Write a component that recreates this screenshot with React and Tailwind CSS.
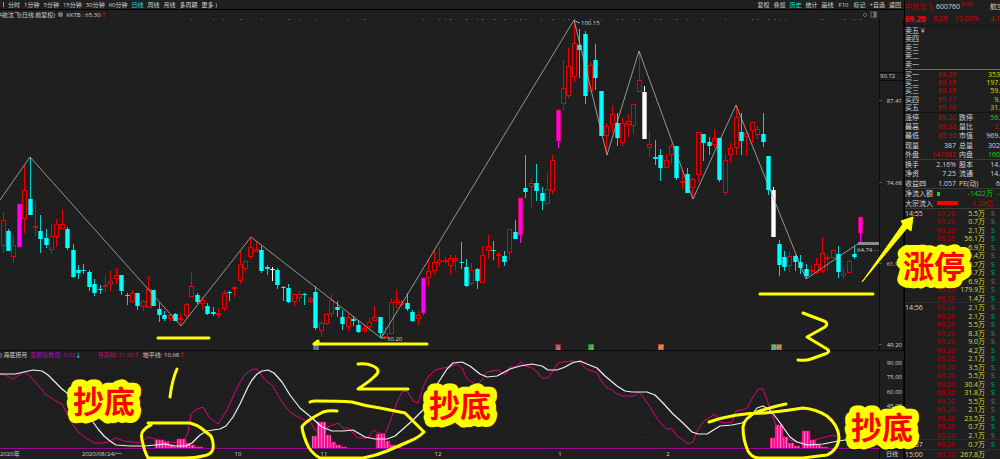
import clsx from 'clsx'

const periods = ['分时', '1分钟', '5分钟', '15分钟', '30分钟', '60分钟', '日线', '周线', '月线', '多周期', '更多 )']
const tools = ['复权', '叠加', '历史', '统计', '画线', 'F10', '标记', '+自选', '返回']

// one entry per day: kind, high, body top, body bottom, low
const candles = [
	['r', 212, 220, 246, 253], ['c', 229, 231, 251, 251], ['r', 237, 245, 257, 263], ['m', 204, 204, 247, 247],
	['r', 165, 190, 219, 233], ['c', 157, 199, 215, 215], ['r', 201, 226, 228, 236], ['c', 215, 231, 239, 253],
	['c', 229, 238, 245, 248], ['r', 224, 236, 250, 254], ['r', 219, 224, 237, 247], ['r', 209, 224, 229, 229],
	['c', 227, 229, 248, 250], ['c', 244, 250, 277, 278], ['c', 265, 270, 273, 279], ['c', 264, 270, 271, 274],
	['c', 270, 272, 287, 291], ['c', 279, 284, 293, 296], ['c', 285, 289, 290, 294], ['r', 275, 285, 287, 292],
	['r', 271, 281, 284, 291], ['r', 268, 275, 279, 284], ['c', 275, 275, 291, 295], ['c', 293, 295, 296, 305],
	['r', 290, 293, 302, 303], ['c', 293, 293, 306, 310], ['r', 300, 301, 307, 311], ['r', 276, 289, 308, 308],
	['c', 290, 290, 306, 306], ['c', 303, 309, 315, 322], ['c', 311, 315, 319, 321], ['r', 314, 315, 319, 321],
	['c', 313, 314, 321, 321], ['r', 313, 318, 319, 326], ['r', 303, 304, 316, 318], ['r', 272, 286, 297, 297],
	['c', 293, 295, 302, 304], ['r', 297, 300, 304, 310], ['c', 303, 306, 314, 315], ['c', 307, 312, 314, 316],
	['r', 308, 313, 315, 318], ['r', 290, 293, 309, 311], ['c', 291, 292, 293, 301], ['r', 286, 287, 288, 297],
	['r', 251, 264, 281, 284], ['r', 260, 261, 269, 273], ['r', 237, 247, 257, 259], ['r', 241, 249, 252, 252],
	['c', 246, 250, 271, 273], ['c', 265, 267, 269, 275], ['w', 267, 269, 270, 281], ['c', 268, 270, 285, 289],
	['c', 286, 287, 288, 301], ['c', 284, 288, 302, 303], ['r', 294, 294, 302, 306], ['r', 291, 294, 298, 302],
	['c', 293, 294, 295, 305], ['r', 297, 299, 302, 303], ['c', 286, 292, 328, 330], ['r', 321, 323, 331, 337],
	['r', 313, 314, 324, 325], ['r', 294, 300, 314, 317], ['c', 301, 307, 310, 317], ['c', 310, 317, 324, 330],
	['r', 314, 317, 327, 331], ['c', 316, 319, 321, 326], ['c', 320, 325, 332, 333], ['r', 324, 328, 331, 333],
	['r', 318, 322, 327, 331], ['r', 306, 317, 321, 321], ['c', 317, 317, 333, 338], ['r', 327, 333, 337, 337],
	['r', 298, 302, 334, 334], ['r', 289, 300, 303, 308], ['r', 300, 302, 305, 307], ['c', 293, 303, 309, 311],
	['c', 310, 312, 321, 322], ['r', 311, 315, 319, 325], ['m', 278, 278, 313, 315], ['r', 259, 271, 278, 287],
	['r', 249, 262, 271, 275], ['r', 247, 260, 263, 266], ['r', 257, 260, 261, 264], ['r', 255, 258, 266, 275],
	['r', 255, 258, 261, 270], ['c', 242, 262, 263, 269], ['c', 259, 267, 286, 287], ['r', 263, 270, 284, 285],
	['c', 268, 269, 281, 289], ['r', 246, 255, 283, 283], ['r', 235, 246, 251, 259], ['c', 241, 250, 251, 260],
	['r', 252, 254, 256, 268], ['c', 251, 256, 262, 266], ['r', 229, 229, 253, 260], ['c', 220, 232, 239, 239],
	['m', 198, 198, 235, 243], ['c', 155, 188, 192, 198], ['r', 178, 183, 187, 207], ['c', 164, 183, 191, 201],
	['c', 187, 193, 201, 210], ['r', 173, 189, 204, 204], ['r', 155, 160, 191, 194], ['m', 110, 110, 141, 148],
	['r', 60, 88, 104, 110], ['r', 48, 66, 96, 98], ['r', 21, 43, 77, 82], ['c', 29, 45, 50, 78],
	['c', 31, 34, 96, 104], ['r', 62, 65, 92, 92], ['c', 44, 60, 78, 90], ['c', 91, 91, 136, 136],
	['r', 123, 126, 136, 155], ['r', 105, 114, 125, 133], ['c', 113, 123, 138, 146], ['r', 118, 123, 143, 146],
	['r', 114, 121, 125, 137], ['r', 104, 104, 126, 134], ['r', 51, 80, 92, 92], ['w', 86, 92, 139, 139],
	['r', 132, 144, 148, 157], ['c', 140, 157, 159, 165], ['c', 149, 155, 168, 181], ['r', 154, 160, 168, 168],
	['r', 143, 146, 155, 164], ['c', 146, 146, 178, 180], ['r', 170, 181, 183, 189], ['c', 168, 174, 193, 193],
	['r', 178, 179, 188, 199], ['r', 132, 132, 175, 182], ['c', 134, 134, 143, 161], ['c', 137, 142, 146, 155],
	['r', 129, 138, 145, 148], ['c', 138, 138, 180, 182], ['r', 154, 160, 193, 196], ['r', 143, 148, 155, 163],
	['r', 105, 117, 148, 155], ['c', 113, 132, 141, 155], ['r', 131, 133, 137, 156], ['r', 122, 122, 131, 143],
	['r', 126, 129, 135, 139], ['c', 113, 134, 142, 147], ['c', 156, 156, 190, 195], ['w', 187, 190, 237, 237],
	['c', 240, 244, 265, 276], ['c', 251, 257, 267, 271], ['r', 252, 256, 266, 272], ['c', 255, 256, 262, 271],
	['c', 255, 262, 268, 274], ['c', 264, 269, 276, 278], ['r', 265, 270, 272, 275], ['r', 258, 264, 273, 274],
	['r', 237, 253, 271, 273], ['r', 255, 257, 258, 270], ['r', 249, 250, 258, 259], ['c', 246, 254, 272, 278],
	['r', 267, 273, 276, 279], ['r', 259, 261, 273, 273], ['c', 246, 254, 257, 259], ['m', 217, 217, 233, 243],
]

const signalDots = [191, 213, 223, 240, 261, 288, 299, 315, 347, 364, 423, 439, 445, 450, 466, 477, 482, 494, 504, 515, 520, 525, 541, 552, 563, 568, 574, 590, 601, 617, 622, 633, 639, 655, 660, 676, 687, 703, 725, 752, 757, 768, 774, 779, 785, 822, 844, 854, 860]
const gridX = [106, 213, 321, 429, 537, 645, 753]

const zigzag = '0,200 30,157 181,326 251,237 381,338 574,20 607,155 639,51 693,199 736,105 806,279 859,243'

const moonLine = '0,374 5,375 13,379 19,375 24,372 30,376 38,385 46,395 52,398 57,402 62,404 66,412 71,422 78,432 86,438 94,443 102,443 108,442 116,438 124,441 132,442 140,443 148,437 155,439 163,441 172,442 183,443 188,432 191,414 197,409 203,407 209,417 218,424 226,412 235,392 243,377 248,372 254,369 257,369 262,376 267,382 272,385 278,395 284,405 290,412 296,416 304,420 311,423 315,430 322,435 328,427 338,423 343,428 348,428 358,438 367,438 374,430 378,433 385,434 387,430 392,416 397,402 402,392 407,391 413,401 418,403 423,387 428,377 435,370 443,368 450,367 457,364 462,368 467,379 473,383 478,384 482,380 487,372 498,370 505,375 510,367 515,367 521,362 526,366 532,368 537,372 542,378 548,378 553,371 558,363 563,362 572,361 580,362 586,369 597,373 602,382 607,388 612,390 617,394 623,396 634,396 639,392 644,398 650,407 658,420 666,429 672,429 677,436 683,440 688,444 693,442 698,429 704,421 715,414 720,422 725,423 732,422 736,411 742,410 747,408 753,397 758,389 763,389 767,400 772,415 777,428 783,437 790,440 797,442 808,442 818,439 833,435 838,437'
const horizonLine = '0,374 15,374 24,372 33,370 42,371 48,375 55,382 62,389 67,393 80,405 93,422 98,429 104,436 110,441 116,445 130,446 145,446 155,445 165,444 175,446 186,446 192,443 200,435 207,431 213,430 220,429 226,426 233,417 240,404 248,387 252,380 257,374 262,371 268,370 274,373 282,382 290,395 300,408 312,418 322,427 332,431 343,431 353,430 365,437 375,439 387,439 395,436 403,429 412,421 418,415 423,410 430,398 438,383 447,369 453,363 462,362 470,366 480,374 487,377 497,376 510,369 520,366 532,364 542,366 548,370 557,370 565,367 572,363 580,361 587,364 597,368 605,376 617,386 625,391 632,392 647,392 655,395 663,403 673,414 683,423 692,432 698,434 707,434 720,426 732,425 742,423 750,417 757,408 763,406 770,410 778,420 785,430 790,437 797,442 807,445 823,444 833,442 845,440 858,440'

// x, width, top of every bar; all stand on the base line
const bars = [
	[155, 9, 440], [164, 5, 442], [169, 5, 445], [174, 3, 447], [177, 9, 439], [186, 4, 443], [190, 5, 445], [195, 8, 447],
	[312, 5, 436], [317, 9, 422], [326, 5, 435], [331, 5, 442], [336, 5, 445], [341, 6, 447],
	[376, 9, 434], [385, 5, 441], [390, 5, 445], [395, 6, 447],
	[770, 5, 438], [775, 8, 425], [783, 5, 437], [788, 6, 443], [794, 6, 446], [802, 8, 431], [810, 6, 440], [816, 5, 445], [821, 7, 447],
]

const markers = [
	[313, '回', '#27508c'], [555, '涨', '#a01c28'], [588, '减', '#138a1c'], [658, '榜', '#c04a10'], [771, '跌', '#1b8a3a'], [776, '榜', '#8a5a2a'],
]

const asks = ['卖五 ¥', '卖四', '卖三', '卖二', '卖一']
const bids = [['买一', '69.20', '3537'], ['买二', '69.19', '197.9'], ['买三', '69.18', '59.9'], ['买四', '69.17', '9.7'], ['买五', '69.16', '31.5']]

const RED = 'text-[#dc0000]'
const WHITE = 'text-[#d2d2d2]'
const GREEN = 'text-[#00dc00]'
const quotes = [
	['涨停', '69.20', RED, '跌停', '56.6', GREEN],
	['最高', '69.20', RED, '量比', '2.0', RED],
	['最低', '65.30', RED, '市值', '969.4', WHITE],
	['现量', '387', WHITE, '总量', '3022', WHITE],
	['外盘', '141982', RED, '内盘', '1602', GREEN],
]
const ratios = [
	['换手', '2.16%', WHITE, '股本', '14.0', WHITE],
	['净资', '7.25', WHITE, '流通', '14.0', WHITE],
	['收益㈣', '1.057', WHITE, 'PE(动)', '65', WHITE],
]

const volumes = ['5.5', '0.7', '2.1', '56.1', '6.9', '9.4', '0.7', '0.7', '6.9', '179.9', '1.4', '2.1', '2.1', '5.5', '8.3', '9.0', '4.2', '2.1', '3.5', '5.5', '30.4', '31.8', '5.5', '2.1', '23.5', '0.7', '2.1', '0.7', '267.8']
const times = { 0: '14:55', 11: '14:56', 27: '14:57', 28: '15:00' }

function Toolbar() {
	return (
		<nav className="flex h-[10px] items-center justify-between border-b border-black pr-[3px]">
			<div className="flex items-center gap-1">
				<span className="h-[5px] w-1 border-r border-[#999]" />
				{periods.map(p => (
					<button key={p} type="button" className={p === '日线' ? 'text-[#00e6e6]' : ''}>{p}</button>
				))}
			</div>
			<div className="flex items-center gap-1">
				{tools.map(p => (
					<button key={p} type="button" className={clsx(p === '历史' && 'text-[#00e6e6]', p === 'F10' && 'px-px')}>{p}</button>
				))}
			</div>
		</nav>
	)
}

function Candle({ x, kind, high, top, bottom, low }) {
	const color = { r: '#e60000', c: '#00ffff', m: '#ff00ff', w: '#ffffff' }[kind]
	const h = Math.max(bottom - top, 1)
	if (kind === 'r') {
		return (
			<g stroke={color} fill="none">
				<path d={`M${x} ${high}V${top}M${x} ${bottom}V${low}`} />
				<rect x={x - 2} y={top + 0.5} width="4" height={Math.max(h - 1, 1)} />
			</g>
		)
	}
	return (
		<g>
			<path d={`M${x} ${high}V${low}`} stroke={color} opacity={kind === 'c' ? 0.8 : 1} />
			<rect x={x - 2.2} y={top} width="4.4" height={h} fill={color} stroke={kind === 'm' ? '#e00040' : 'none'} strokeWidth="0.6" />
		</g>
	)
}

function PriceChart() {
	return (
		<svg viewBox="0 19 904 332" className="block w-full" fontSize="6" fill="#d2d2d2">
			<g stroke="#171717" strokeDasharray="1 1">
				{gridX.map(x => <path key={x} d={`M${x}.5 19V350`} />)}
				{[100, 182, 263].map(y => <path key={y} d={`M0 ${y}.5H879`} />)}
			</g>
			{signalDots.map(x => <rect key={x} x={x} y="19" width="1" height="1" fill="#e600e6" />)}

			{candles.map(([kind, high, top, bottom, low], i) => (
				<Candle key={i} x={Math.floor(3.05 + i * 5.39) + 0.5} kind={kind} high={high} top={top} bottom={bottom} low={low} />
			))}
			<polyline points={zigzag} fill="none" stroke="#b4b4b4" strokeWidth="0.8" />
			<path d="M575 21l5 2M381 338h5" stroke="#c8c8c8" strokeWidth="0.8" />
			<text x="581" y="25">100.15</text>
			<text x="387" y="341">50.20</text>
			<rect x="858" y="242" width="21" height="3" fill="#8c8c8c" />
			<text x="857" y="252">64.74 - -</text>

			{markers.map(([x, label, fill]) => (
				<g key={x}>
					<rect x={x} y="344" width="6" height="6" fill={fill} />
					<text x={x + 3} y="349" fontSize="5" textAnchor="middle">{label}</text>
				</g>
			))}

			<path d="M879.5 19V350M903.5 19V350M0 350.5H904M879 72.5H904M879 80.5H904" stroke="#0a0a0a" />
			<path d="M879 100.5h3M879 182.5h3M879 263.5h3M879 344.5h3" stroke="#555" />
			<text x="880" y="78">90.72</text>
			<g textAnchor="end">
				<text x="902" y="103">87.41</text>
				<text x="902" y="185">74.68</text>
				<text x="902" y="266">61.94</text>
				<text x="902" y="347">49.20</text>
			</g>
		</svg>
	)
}

function IndicatorChart() {
	return (
		<svg viewBox="0 359 904 100" className="block w-full" fontSize="6" fill="#d2d2d2">
			<defs>
				<pattern id="stripe" width="3" height="4" patternUnits="userSpaceOnUse">
					<rect width="3" height="4" fill="#ff1496" />
					<rect width="1" height="4" fill="#ff78d2" />
				</pattern>
			</defs>
			<g stroke="#171717" strokeDasharray="1 1">
				{gridX.map(x => <path key={x} d={`M${x}.5 359V449`} />)}
				{[363, 377, 391, 406, 420, 434].map(y => <path key={y} d={`M0 ${y}.5H879`} />)}
			</g>
			<polyline points={moonLine} fill="none" stroke="#e0007a" strokeLinejoin="round" />
			{bars.map(([x, w, top]) => (
				<rect key={x} x={x} y={top} width={w} height={449 - top} fill="url(#stripe)" stroke="#f00050" strokeWidth="0.5" />
			))}
			<polyline points={horizonLine} fill="none" stroke="#f0f0f0" strokeWidth="1.2" strokeLinejoin="round" />
			<path d="M0 448.5H879" stroke="#a000a0" />
			<path d="M0 449.5H904M879.5 359V459M903.5 359V459" stroke="#0a0a0a" />
			<g textAnchor="end">
				<text x="902" y="365">90.00</text>
				<text x="902" y="379">75.00</text>
				<text x="902" y="394">60.00</text>
				<text x="902" y="408">45.00</text>
			</g>
			<text x="0" y="456">2020年</text>
			<text x="82" y="456">2020/08/24/一</text>
			<g textAnchor="middle">
				<text x="238" y="456">10</text>
				<text x="324" y="456">11</text>
				<text x="438" y="456">12</text>
				<text x="560" y="456">1</text>
				<text x="668" y="456">2</text>
				<text x="892" y="456">日线</text>
			</g>
		</svg>
	)
}

function PairTable({ rows, className }) {
	return (
		<table className={clsx('w-full table-fixed border-b border-[#3a3a3a]', className)}>
			<tbody>
				{rows.map(([a, av, ac, b, bv, bc]) => (
					<tr key={a}>
						<td className="w-[22px]">{a}</td>
						<td className={clsx('w-[29px] text-right', ac)}>{av}</td>
						<td className="w-[26px] pl-[3px]">{b}</td>
						<td className={clsx('text-right', bc)}>{bv}</td>
					</tr>
				))}
			</tbody>
		</table>
	)
}

function QuotePanel() {
	return (
		<aside className="w-24 shrink-0 overflow-hidden border-l border-black text-[7px]">
			<div className="w-[99px]">
				<header className="h-[26px] border-b border-[#151515]">
					<div className="flex h-[13px] items-center">
						<span className="text-[#be0000]">中航沈飞</span>
						<span className="ml-[3px]">600760</span>
						<sup className="ml-px text-[5px] text-[#dc0000]">R300</sup>
						<span className="ml-auto">航空</span>
					</div>
					<div className="flex h-[11px] items-center justify-between text-[#dc0000]">
						<b className="text-[8px] text-[#ff0000]">69.20</b>
						<span>6.29</span>
						<span>10.00%</span>
						<span className="pl-1">4.18</span>
					</div>
				</header>
				<table className="h-[44px] w-full border-b border-[#8c6e3c]">
					<tbody>
						{asks.map(a => <tr key={a}><td>{a}</td></tr>)}
					</tbody>
				</table>
				<table className="h-[43px] w-full table-fixed border-b border-[#151515]">
					<tbody>
						{bids.map(([label, price, amount]) => (
							<tr key={label}>
								<td className="w-[22px]">{label}</td>
								<td className="w-[29px] text-right text-[#dc0000]">{price}</td>
								<td className="text-right text-[#dcdc00]">{amount}</td>
							</tr>
						))}
					</tbody>
				</table>
				<PairTable rows={quotes} className="h-[47px]" />
				<PairTable rows={ratios} className="h-[29px]" />
				<table className="h-[20px] w-full table-fixed border-b border-[#3a3a3a]">
					<tbody>
						<tr>
							<td className="w-8">净流入额</td>
							<td><span className="block h-1 w-[3px] bg-[#00e600]" /></td>
							<td className="w-8 text-right text-[#00dc00]">-1422万</td>
							<td className="w-[11px] text-center text-[#00dc00]">-</td>
						</tr>
						<tr>
							<td>大宗流入</td>
							<td><span className="block h-1 w-[21px] bg-[#ff0000]" /></td>
							<td className="text-right text-[#dc0000]">1.28亿</td>
							<td />
						</tr>
					</tbody>
				</table>
				<table className="h-[250px] w-full table-fixed">
					<tbody>
						{volumes.map((v, i) => (
							<tr key={i} className={clsx(times[i] && i > 0 && 'border-t border-[#2c2c2c]')}>
								<td className="w-[22px]">{times[i]}</td>
								<td className="w-[28px] text-right text-[#be0000]">69.20</td>
								<td className="w-[30px] text-right text-[#dcdc3c]">{v}万</td>
								<td className="pl-[6px] text-[#00b45a]">{i < 28 && 'S'}</td>
							</tr>
						))}
					</tbody>
				</table>
			</div>
		</aside>
	)
}

function Callout({ x, y, children }) {
	return (
		<text x={x} y={y} fontSize="31" fontWeight="700" textAnchor="middle" fill="#ff0000" stroke="#ffff00" strokeWidth="14" strokeLinejoin="round" paintOrder="stroke">
			{children}
		</text>
	)
}

function Annotations() {
	return (
		<svg viewBox="0 0 1000 459" className="pointer-events-none absolute inset-0 h-full w-full">
			<g fill="none" stroke="#ffff00" strokeWidth="3" strokeLinecap="round" strokeLinejoin="round">
				<path d="M158 338H209M314 344H427M314 344l4-3v3M760 294H873" />
				<path d="M177 369Q172 380 170 397" />
				<path d="M358 364Q367 363 373 366Q382 370 375 376Q370 381 358 389H408" />
				<path d="M803 313L824 321Q829 323 825 327L807 337L827 349Q831 352 825 354L811 359Q806 361 798 360" />
				<path d="M148 423H190Q197 425 201 428L211 436Q214 442 213 449Q211 455 203 456Q195 458 185 458H148Q144 450 143 444Q140 434 143 431Q146 427 151 425" />
				<path d="M310 402Q312 401 316 401Q340 401 352 402Q365 406 380 408L405 413L424 432Q418 438 410 441L387 451Q375 456 363 458H320Q314 455 309 448Q303 436 302 427Q304 422 323 412Q330 410 337 411" />
				<path d="M786 404Q768 408 757 412Q744 418 743 427Q743 440 748 451Q752 458 759 458H803L827 455Q839 449 839 437Q838 425 827 416Q816 409 803 408Q785 411 765 413Q735 413 709 422" />
			</g>
			<path d="M862 282L903 224L901 221L913 217L911 231L907 228Z" fill="#ffff00" stroke="#ffff00" strokeWidth="1" strokeLinejoin="round" />
			<Callout x="104" y="413">抄底</Callout>
			<Callout x="460" y="417">抄底</Callout>
			<Callout x="882" y="439">抄底</Callout>
			<Callout x="934" y="278">涨停</Callout>
		</svg>
	)
}

export default function App() {
	return (
		<main className="relative flex overflow-hidden bg-[#1f1f1f] font-['Open_Sans','Noto_Sans_CJK_SC',sans-serif] text-[6px] leading-none whitespace-nowrap text-[#d2d2d2]">
			<section className="min-w-0 flex-1">
				<Toolbar />
				<div className="-ml-1 flex h-[9px] items-center gap-[3px]">
					<span>中航沈飞(日线.前复权)</span>
					<span className="size-[5px] rounded-full bg-[#777]" />
					<span>KKTB : 65.30<span className="text-[#ff0000]">↑</span></span>
					<svg viewBox="0 0 16 8" className="mr-[26px] ml-auto h-2 w-4" fill="none" stroke="#777" strokeWidth="0.8">
						<path d="M3 2L5 4L3 6L1 4Z" />
						<rect x="9" y="1" width="5" height="5" />
						<path d="M12 1h2v5h-2z" fill="#777" />
					</svg>
				</div>
				<PriceChart />
				<div className="flex h-2 items-center">
					<span>) 海底捞月</span>
					<span className="ml-[3px] text-[#be00be]">底部指数值: 0.02<span className="text-[#00ffff]">↓</span></span>
					<span className="ml-4 text-[#d2006e]">月亮线: 21.00<span className="text-[#ff0000]">↑</span></span>
					<span className="ml-[3px]">地平线: 10.68<span className="text-[#ff0000]">↑</span></span>
				</div>
				<IndicatorChart />
			</section>
			<QuotePanel />
			<Annotations />
		</main>
	)
}
